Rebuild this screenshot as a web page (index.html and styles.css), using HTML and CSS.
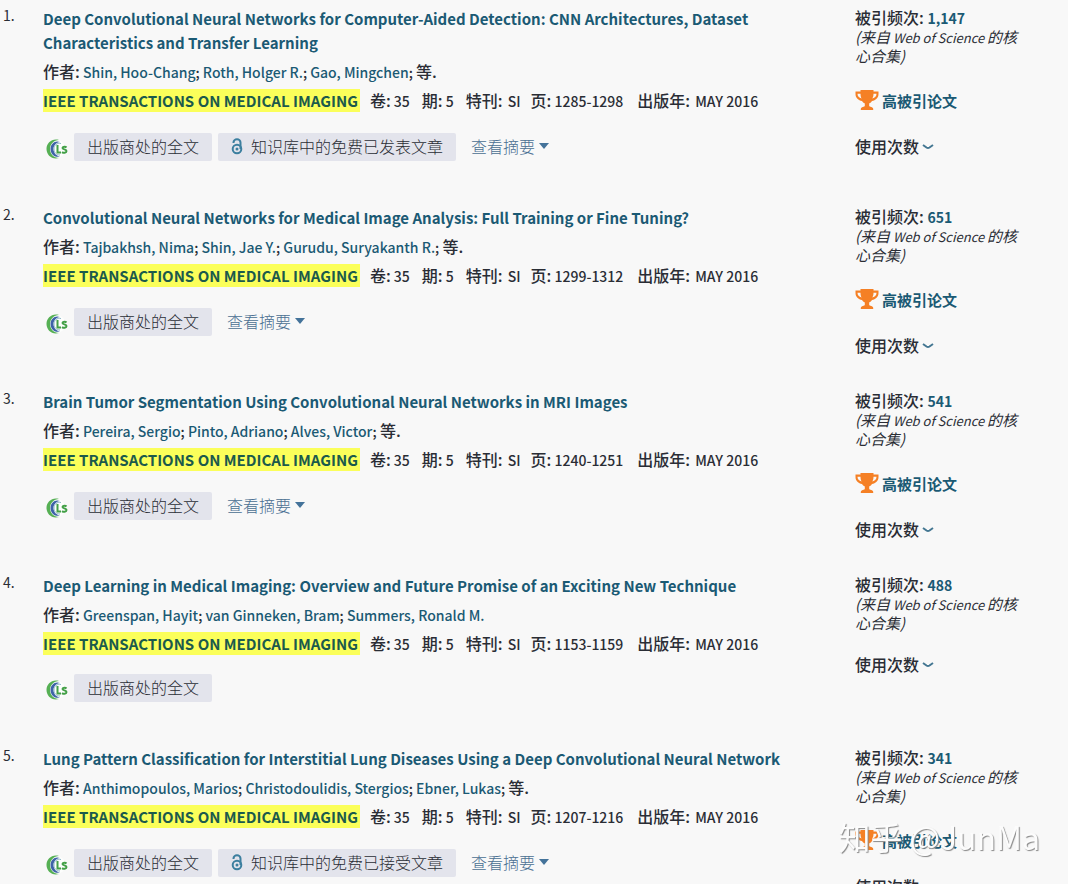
FILE: index.html
```html
<!DOCTYPE html>
<html lang="zh-CN">
<head>
    <meta charset="UTF-8">
    <meta name="viewport" content="width=device-width, initial-scale=1.0">
    <title>检索结果</title>
    <link rel="stylesheet" href="styles.css">
</head>
<body>
    <!-- icons -->
    <svg class="sprite" aria-hidden="true">
        <symbol id="cls" viewBox="0 0 22 20">
            <circle cx="10.500" cy="10" r="9" fill="#fdfefd"/>
            <path d="M13 1C6-1 .5 4 .5 10s5.500 11 12.500 9c-5 0-9-4-9-9s4-9 9-9z" fill="#56b054"/>
            <path d="M14 3C9 1 4.500 5 4.500 10s4 9 9.500 7.500c-4-.5-6.500-4-6.500-7.500S10 3.500 14 3z" fill="#3e62a8"/>
            <path d="M15 4.500c-4-1-7 2-7 5.500s2.500 6 6 6" fill="none" stroke="#8fb8c8" stroke-width="1"/>
            <path d="M11.500 6v7.500h3.500" fill="none" stroke="#43a047" stroke-width="2"/>
            <path d="M20.500 8.500c-1-1-4-1-4 .6 0 1.600 4 1 4 3s-3 2-4.500 1" fill="none" stroke="#43a047" stroke-width="2"/>
        </symbol>
        <symbol id="oa" viewBox="0 0 12 17">
            <path d="M2.500 5V4.500a3.500 3.200 0 0 1 7 0V11" fill="none" stroke="#3c7f9f" stroke-width="2"/>
            <circle cx="6" cy="11" r="4.300" fill="none" stroke="#3c7f9f" stroke-width="2"/>
            <circle cx="6" cy="11" r="1.500" fill="#3c7f9f"/>
        </symbol>
        <symbol id="trophy" viewBox="0 0 24 20">
            <path d="M5.500 0h13v1.500h5v2.500c0 4-3 6.500-6.500 7-1 1.500-2 2-2.800 2.500V16c0 1 4 .8 4 3v1H5.800v-1c0-2.200 4-2 4-3v-2.500C9 13 8 12.500 7 11 3.500 10.500.5 8 .5 4V1.500h5zM5.500 3.800h-3c0 2.500 1.500 4 4.200 4.800C5.900 7.500 5.500 6 5.500 3.800zm13 0c0 2-.4 3.700-1.200 4.800C20 7.800 21.500 6.300 21.500 3.800z" fill="#f58025" fill-rule="evenodd"/>
        </symbol>
        <symbol id="chevron" viewBox="0 0 12 8">
            <path d="M1 2l3.500 2.500q1.500 1 3 0L11 2" fill="none" stroke="#447792" stroke-width="2"/>
        </symbol>
    </svg>

    <main>
        <article class="item">
            <div class="num">1.</div>
            <div class="record">
                <h3><a href="#">Deep Convolutional Neural Networks for Computer-Aided Detection: CNN Architectures, Dataset Characteristics and Transfer Learning</a></h3>
                <p class="authors"><span class="label">作者:</span> <a href="#">Shin, Hoo-Chang</a>; <a href="#">Roth, Holger R.</a>; <a href="#">Gao, Mingchen</a>; <span class="label">等.</span></p>
                <p class="source"><a href="#"><mark>IEEE TRANSACTIONS ON MEDICAL IMAGING</mark></a><span class="volume"><b>卷:</b> 35</span><span><b>期:</b> 5</span><span class="issue"><b>特刊:</b> SI</span><span class="pages"><b>页:</b> 1285-1298</span><span class="year"><b>出版年:</b> MAY 2016</span></p>
                <div class="links">
                    <svg class="cls"><use href="#cls"/></svg>
                    <button class="btn">出版商处的全文</button>
                    <button class="btn free"><svg class="oa"><use href="#oa"/></svg>知识库中的免费已发表文章</button>
                    <button class="abstract">查看摘要</button>
                </div>
            </div>
            <aside class="cites">
                <p class="count">被引频次: <a href="#">1,147</a></p>
                <p class="from">(来自<span> Web of Science </span>的核心合集)</p>
                <a class="hot" href="#"><svg><use href="#trophy"/></svg>高被引论文</a>
                <button class="usage">使用次数<svg><use href="#chevron"/></svg></button>
            </aside>
        </article>

        <article class="item">
            <div class="num">2.</div>
            <div class="record">
                <h3><a href="#">Convolutional Neural Networks for Medical Image Analysis: Full Training or Fine Tuning?</a></h3>
                <p class="authors"><span class="label">作者:</span> <a href="#">Tajbakhsh, Nima</a>; <a href="#">Shin, Jae Y.</a>; <a href="#">Gurudu, Suryakanth R.</a>; <span class="label">等.</span></p>
                <p class="source"><a href="#"><mark>IEEE TRANSACTIONS ON MEDICAL IMAGING</mark></a><span class="volume"><b>卷:</b> 35</span><span><b>期:</b> 5</span><span class="issue"><b>特刊:</b> SI</span><span class="pages"><b>页:</b> 1299-1312</span><span class="year"><b>出版年:</b> MAY 2016</span></p>
                <div class="links">
                    <svg class="cls"><use href="#cls"/></svg>
                    <button class="btn">出版商处的全文</button>
                    <button class="abstract">查看摘要</button>
                </div>
            </div>
            <aside class="cites">
                <p class="count">被引频次: <a href="#">651</a></p>
                <p class="from">(来自<span> Web of Science </span>的核心合集)</p>
                <a class="hot" href="#"><svg><use href="#trophy"/></svg>高被引论文</a>
                <button class="usage">使用次数<svg><use href="#chevron"/></svg></button>
            </aside>
        </article>

        <article class="item">
            <div class="num">3.</div>
            <div class="record">
                <h3><a href="#">Brain Tumor Segmentation Using Convolutional Neural Networks in MRI Images</a></h3>
                <p class="authors"><span class="label">作者:</span> <a href="#">Pereira, Sergio</a>; <a href="#">Pinto, Adriano</a>; <a href="#">Alves, Victor</a>; <span class="label">等.</span></p>
                <p class="source"><a href="#"><mark>IEEE TRANSACTIONS ON MEDICAL IMAGING</mark></a><span class="volume"><b>卷:</b> 35</span><span><b>期:</b> 5</span><span class="issue"><b>特刊:</b> SI</span><span class="pages"><b>页:</b> 1240-1251</span><span class="year"><b>出版年:</b> MAY 2016</span></p>
                <div class="links">
                    <svg class="cls"><use href="#cls"/></svg>
                    <button class="btn">出版商处的全文</button>
                    <button class="abstract">查看摘要</button>
                </div>
            </div>
            <aside class="cites">
                <p class="count">被引频次: <a href="#">541</a></p>
                <p class="from">(来自<span> Web of Science </span>的核心合集)</p>
                <a class="hot" href="#"><svg><use href="#trophy"/></svg>高被引论文</a>
                <button class="usage">使用次数<svg><use href="#chevron"/></svg></button>
            </aside>
        </article>

        <article class="item">
            <div class="num">4.</div>
            <div class="record">
                <h3><a href="#">Deep Learning in Medical Imaging: Overview and Future Promise of an Exciting New Technique</a></h3>
                <p class="authors"><span class="label">作者:</span> <a href="#">Greenspan, Hayit</a>; <a href="#">van Ginneken, Bram</a>; <a href="#">Summers, Ronald M.</a></p>
                <p class="source"><a href="#"><mark>IEEE TRANSACTIONS ON MEDICAL IMAGING</mark></a><span class="volume"><b>卷:</b> 35</span><span><b>期:</b> 5</span><span class="issue"><b>特刊:</b> SI</span><span class="pages"><b>页:</b> 1153-1159</span><span class="year"><b>出版年:</b> MAY 2016</span></p>
                <div class="links short">
                    <svg class="cls"><use href="#cls"/></svg>
                    <button class="btn">出版商处的全文</button>
                </div>
            </div>
            <aside class="cites">
                <p class="count">被引频次: <a href="#">488</a></p>
                <p class="from">(来自<span> Web of Science </span>的核心合集)</p>
                <button class="usage">使用次数<svg><use href="#chevron"/></svg></button>
            </aside>
        </article>

        <article class="item">
            <div class="num">5.</div>
            <div class="record">
                <h3><a href="#">Lung Pattern Classification for Interstitial Lung Diseases Using a Deep Convolutional Neural Network</a></h3>
                <p class="authors"><span class="label">作者:</span> <a href="#">Anthimopoulos, Marios</a>; <a href="#">Christodoulidis, Stergios</a>; <a href="#">Ebner, Lukas</a>; <span class="label">等.</span></p>
                <p class="source"><a href="#"><mark>IEEE TRANSACTIONS ON MEDICAL IMAGING</mark></a><span class="volume"><b>卷:</b> 35</span><span><b>期:</b> 5</span><span class="issue"><b>特刊:</b> SI</span><span class="pages"><b>页:</b> 1207-1216</span><span class="year"><b>出版年:</b> MAY 2016</span></p>
                <div class="links">
                    <svg class="cls"><use href="#cls"/></svg>
                    <button class="btn">出版商处的全文</button>
                    <button class="btn free"><svg class="oa"><use href="#oa"/></svg>知识库中的免费已接受文章</button>
                    <button class="abstract">查看摘要</button>
                </div>
            </div>
            <aside class="cites">
                <p class="count">被引频次: <a href="#">341</a></p>
                <p class="from">(来自<span> Web of Science </span>的核心合集)</p>
                <a class="hot" href="#"><svg><use href="#trophy"/></svg>高被引论文</a>
                <button class="usage">使用次数<svg><use href="#chevron"/></svg></button>
            </aside>
        </article>
    </main>

    <div class="watermark">知乎 @JunMa</div>
</body>
</html>
```
FILE: styles.css
```css
*{
    margin: 0;
    padding: 0;
    box-sizing: border-box;
}
body{
    height: 100vh;
    overflow: hidden;
    background-color: #f8f8f8;
    color: #2a2d35;
    font-family: "Noto Sans CJK SC", sans-serif;
    font-size: 14px;
}
a{
    color: #1b5a74;
    text-decoration: none;
}
a:hover{
    text-decoration: underline;
}
button{
    border: none;
    background: none;
    color: inherit;
    font-family: inherit;
    font-size: 16px;
    cursor: pointer;
}
.sprite{
    display: none;
}
main{
    padding-top: 7px;
}

.item{
    display: grid;
    grid-template-columns: 40px 1fr 213px;
    padding-left: 3px;
    align-items: start;
}
.num{
    line-height: 16px;
}

.record{
    padding-right: 40px;
    padding-bottom: 45px;
}
.record h3{
    font-size: 15px;
    font-weight: 700;
    line-height: 24px;
}
.authors, .source{
    margin-top: 5px;
    font-weight: 500;
    line-height: 24px;
}
.label, .source b{
    font-size: 16px;
    font-weight: 500;
    line-height: 1;
}
.source span{
    margin-left: 12px;
}
.source .volume, .source .pages{
    margin-left: 10px;
}
.source .year{
    margin-left: 14px;
}
.source .issue b, .source .year b{
    margin-right: 2px;
}
mark{
    padding: 1px 2px 1px 0;
    background-color: #fbff5a;
    color: #1b5a4c;
    font-size: 15px;
    font-weight: 700;
    line-height: 1;
}

.links{
    display: flex;
    align-items: center;
    margin-top: 20px;
    padding-left: 3px;
}
.links.short{
    margin-top: 18px;
}
.cls{
    width: 22px;
    height: 20px;
    margin: 3px 6px 0 0;
}
.btn{
    display: flex;
    align-items: center;
    height: 28px;
    padding: 0 13px 2px;
    border-radius: 2px;
    background-color: #e3e4ec;
    font-weight: 300;
}
.free{
    margin-left: 6px;
}
.oa{
    width: 12px;
    height: 17px;
    margin-right: 8px;
}
.abstract{
    display: flex;
    align-items: center;
    height: 28px;
    margin-left: 15px;
    padding-bottom: 2px;
    color: #4a6f92;
    font-weight: 300;
}
.abstract::after{
    content: "";
    margin-left: 4px;
    border: 5px solid transparent;
    border-top: 6px solid #44739a;
    border-bottom: none;
}

.cites{
    padding-bottom: 32px;
}
.count{
    font-size: 16px;
    font-weight: 500;
    line-height: 20px;
}
.count a{
    font-size: 14px;
    font-weight: 700;
    line-height: 1;
}
.from{
    max-width: 168px;
    font-size: 15px;
    font-style: italic;
    line-height: 19px;
}
.from span{
    font-size: 13px;
    line-height: 1;
}
.hot{
    display: flex;
    align-items: center;
    height: 26px;
    margin-top: 23px;
    padding-bottom: 2px;
    font-size: 15px;
    font-weight: 700;
}
.hot svg{
    width: 24px;
    height: 20px;
    margin-right: 3px;
}
.usage{
    display: flex;
    align-items: center;
    margin-top: 20px;
    font-weight: 500;
    line-height: 25px;
}
.usage svg{
    width: 12px;
    height: 8px;
    margin-left: 3px;
}

.watermark{
    position: fixed;
    right: 28px;
    bottom: 28px;
    color: #fcfcfc;
    font-size: 32px;
    line-height: 40px;
    text-shadow: 1px 1px 1px #888;
}
```
